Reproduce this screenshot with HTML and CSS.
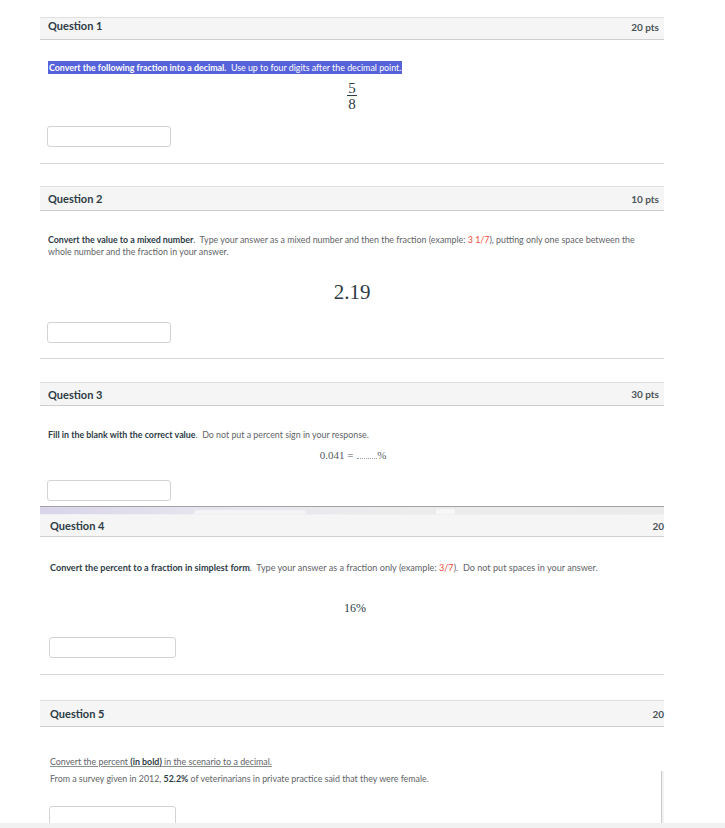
FILE: index.html
```html
<!DOCTYPE html>
<html>
<head>
<meta charset="utf-8">
<link rel="stylesheet" href="styles.css">
</head>
<body>
<div class="page">

  <section class="q q1">
    <div class="q-header"><span class="q-title">Question 1</span><span class="pts">20 pts</span></div>
    <div class="q-body">
      <p class="txt t1"><span class="hl"><b>Convert the following fraction into a decimal.</b>&nbsp; Use up to four digits after the decimal point.</span></p>
      <div class="math frac-wrap"><span class="frac"><span class="num">5</span><span class="den">8</span></span></div>
      <div class="answer a1"></div>
    </div>
  </section>

  <section class="q q2">
    <div class="q-header"><span>Question 2</span><span class="pts">10 pts</span></div>
    <div class="q-body">
      <p class="txt t2"><b>Convert the value to a mixed number</b>.&nbsp; Type your answer as a mixed number and then the fraction (example: <span class="red">3 1/7</span>), putting only one space between the<br>whole number and the fraction in your answer.</p>
      <div class="math big">2.19</div>
      <div class="answer a2"></div>
    </div>
  </section>

  <section class="q q3">
    <div class="q-header"><span>Question 3</span><span class="pts">30 pts</span></div>
    <div class="q-body">
      <p class="txt t3"><b>Fill in the blank with the correct value</b>.&nbsp; Do not put a percent sign in your response.</p>
      <div class="math eq">0.041 = <span class="blank"></span>%</div>
      <div class="answer a3"></div>
    </div>
    <div class="seam"><span class="seam-chip"></span><span class="seam-chip small"></span></div>
  </section>

  <section class="q q4 wide">
    <div class="q-header"><span>Question 4</span><span class="pts">20</span></div>
    <div class="q-body">
      <p class="txt t4"><b>Convert the percent to a fraction in simplest form</b>.&nbsp; Type your answer as a fraction only (example: <span class="red">3/7</span>).&nbsp; Do not put spaces in your answer.</p>
      <div class="math mid">16%</div>
      <div class="answer a4"></div>
    </div>
  </section>

  <section class="q q5 wide">
    <div class="q-header"><span>Question 5</span><span class="pts">20</span></div>
    <div class="q-body">
      <p class="txt t5 ul">Convert the percent <b>(in bold)</b> in the scenario to a decimal.</p>
      <p class="txt t6">From a survey given in 2012, <b>52.2%</b> of veterinarians in private practice said that they were female.</p>
      <div class="answer a5"></div>
    </div>
  </section>

</div>
<div class="bottom-band"></div>
</body>
</html>
```

FILE: styles.css
```css
html, body {
  margin: 0;
  padding: 0;
  background: #ffffff;
  height: 828px;
  overflow: hidden;
}

body {
  font-family: Lato, "Open Sans", sans-serif;
  color: #555a5e;
  position: relative;
}

.page {
  width: 624px;
  margin-left: 40px;
}

.q-header {
  display: flex;
  justify-content: space-between;
  align-items: center;
  height: 21px;
  padding: 0 5px 0 8px;
  background: #f5f5f5;
  border-top: 1px solid #e0e0e0;
  border-bottom: 1px solid #cfcfcf;
  font-size: 11px;
  font-weight: 700;
  color: #2d3b45;
}

.q-header .pts {
  font-size: 10px;
  color: #4a5358;
}

.q1 .q-header { align-items: flex-start; padding-top: 1px; height: 20px; }
.q1 .q-header .pts { padding-top: 2px; }

.q-body {
  padding: 1px 8px 0;
  border-bottom: 1px solid #d6d6d6;
  position: relative;
}

.wide .q-header { padding-left: 10px; padding-right: 0; }
.wide .q-body { padding-left: 10px; }

.txt {
  margin: 0;
  font-size: 8.85px;
  line-height: 12px;
  color: #5f6468;
}

.txt b { color: #2d3b45; font-weight: 700; }

.red { color: #ee4b3b; }

.hl {
  background: #5662d9;
  color: #ffffff;
  padding: 1px 1px 1px 1px;
}

.hl b { color: #ffffff; }

.math {
  font-family: "Liberation Serif", "DejaVu Serif", serif;
  color: #2d3b45;
  text-align: center;
}

/* Q1 */
.q1 { margin-top: 17px; }
.t1 { margin-top: 21px; }
.frac-wrap { margin-top: 8px; height: 25px; display: flex; justify-content: center; }
.frac {
  display: inline-flex;
  flex-direction: column;
  align-items: center;
  font-family: "Liberation Serif", "DejaVu Serif", serif;
  font-size: 15px;
  line-height: 12px;
}
.frac .num { padding: 0 1px 1px; border-bottom: 1px solid #2d3b45; }
.frac .den { padding-top: 2px; }
.a1 { margin-top: 19px; }
.q1 .q-body { padding-bottom: 16px; }

.answer {
  width: 122px;
  height: 19px;
  border: 1px solid #d0d4d7;
  border-radius: 3px;
  background: #ffffff;
  margin-left: -1px;
}

/* Q2 */
.q2 { margin-top: 22px; }
.q2 .q-header { height: 23px; }
.t2 { margin-top: 22px; }
.big { margin-top: 22px; font-size: 21px; line-height: 25px; }
.a2 { margin-top: 17px; }
.q2 .q-body { padding-bottom: 15px; }

/* Q3 */
.q3 { margin-top: 23px; }
.q3 .q-header { height: 22px; }
.t3 { margin-top: 22px; }
.eq { margin-top: 8px; font-size: 11px; line-height: 12px; color: #555a5e; padding-left: 2px; }
.blank {
  display: inline-block;
  width: 20px;
  border-bottom: 1px dotted #9aa0a4;
  margin-left: 1px;
}
.a3 { margin-top: 19px; }
.q3 .q-body { padding-bottom: 5px; border-bottom: 1px solid #a3a3a3; }

.seam {
  height: 7px;
  background: linear-gradient(90deg, #d9d4ea 0%, #e6e4ee 25%, #ececec 60%, #eaeaea 100%);
  display: flex;
  align-items: flex-end;
}
.seam-chip {
  margin-left: 154px;
  width: 112px;
  height: 4px;
  background: #f4f4f6;
  border-radius: 4px 4px 0 0;
}
.seam-chip.small {
  margin-left: 130px;
  width: 19px;
  height: 5px;
  background: #f7f7f7;
  border-radius: 2px 2px 0 0;
}

/* Q4 */
.q4 .q-header { height: 21px; border-top-color: #f0f0f0; }
.t4 { margin-top: 24px; font-size: 9.1px; }
.mid { margin-top: 28px; font-size: 12px; line-height: 12px; padding-left: 4px; }
.a4 { margin-top: 23px; width: 125px; }
.q4 .q-body { padding-bottom: 16px; }

/* Q5 */
.q5 { margin-top: 25px; }
.q5 .q-header { height: 25px; }
.t5 { margin-top: 28px; }
.ul { text-decoration: underline; text-decoration-color: #8a8f93; }
.t6 { margin-top: 5px; }
.a5 { margin-top: 21px; width: 125px; height: 30px; }
.q5 .q-body { border-bottom: none; }
.q5 .q-body::after {
  content: "";
  position: absolute;
  right: 0;
  top: 44px;
  width: 2px;
  height: 70px;
  border-left: 1px solid #c9c9c9;
  background: #f2f2f2;
}

.bottom-band {
  position: absolute;
  left: 0;
  right: 0;
  top: 823px;
  height: 5px;
  background: #f1f1f1;
}
```
